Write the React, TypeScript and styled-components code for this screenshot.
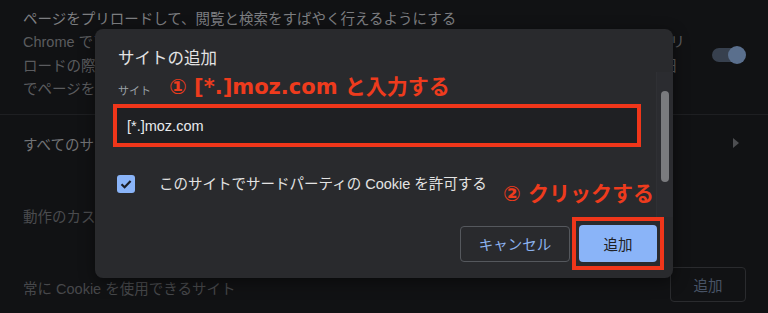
import React from "react";
import styled, { createGlobalStyle } from "styled-components";

const GlobalStyle = createGlobalStyle`
  html, body {
    margin: 0;
    padding: 0;
    background: #111214;
  }
  body {
    font-family: "Liberation Sans", "Noto Sans CJK JP", sans-serif;
    -webkit-font-smoothing: antialiased;
  }
`;

const Page = styled.div`
  position: relative;
  width: 768px;
  height: 313px;
  overflow: hidden;
  background: #111214;
  font-size: 14.5px;
`;

const PreloadRow = styled.div`
  display: flex;
  align-items: center;
  padding: 8px 22px 13px 23px;
  border-bottom: 1px solid #1e1f22;
`;

const TextColumn = styled.div`
  flex: 1;
  min-width: 0;
`;

const Line = styled.div<{ $tone?: "primary" | "secondary" }>`
  line-height: 23.3px;
  white-space: nowrap;
  color: ${(p) => (p.$tone === "secondary" ? "#5b5c5f" : "#7d7e81")};
`;

const Toggle = styled.span`
  position: relative;
  display: block;
  width: 34px;
  height: 18px;

  &::before {
    content: "";
    position: absolute;
    left: 0;
    top: 2px;
    width: 33px;
    height: 14px;
    border-radius: 7px;
    background: #37404e;
  }
  &::after {
    content: "";
    position: absolute;
    right: 0;
    top: 0;
    width: 18px;
    height: 18px;
    border-radius: 50%;
    background: #5a6f8d;
  }
`;

const LinkRow = styled.div`
  display: flex;
  align-items: center;
  justify-content: space-between;
  height: 56px;
  padding: 0 29px 0 23px;
  color: #727376;
`;

const SectionHeading = styled.div`
  padding: 34px 23px 0;
  line-height: 24px;
  color: #4a4b4e;
`;

const SiteListRow = styled.div`
  display: flex;
  align-items: center;
  justify-content: space-between;
  padding: 38px 22px 0 23px;
  color: #47484b;
`;

const SiteListLabel = styled.span`
  margin-top: 5px;
`;

const GhostButton = styled.button`
  width: 76px;
  height: 35px;
  border: 1px solid #2a2b2e;
  border-radius: 4px;
  background: transparent;
  color: #485366;
  font: inherit;
  font-size: 14.5px;
`;

/* modal */

const Dialog = styled.div`
  position: absolute;
  left: 95px;
  top: 29px;
  width: 578px;
  height: 249px;
  display: flex;
  flex-direction: column;
  background: #292a2d;
  border-radius: 8px;
  box-shadow: 0 4px 16px rgba(0, 0, 0, 0.45);
`;

const DialogTitle = styled.h2`
  margin: 0;
  padding: 19px 0 0 23px;
  font-size: 16.5px;
  line-height: 20px;
  font-weight: 400;
  color: #e3e3e3;
`;

const DialogBody = styled.div`
  position: relative;
  flex: 1;
  min-height: 0;
  display: flex;
  margin-top: 4px;
`;

const BodyContent = styled.div`
  flex: 1;
  padding: 2px 19px 0 22px;
`;

const LabelRow = styled.div`
  display: flex;
  align-items: flex-end;
  gap: 18px;
  height: 26px;
`;

const FieldLabel = styled.span`
  margin: 0 0 2px 1px;
  font-size: 11px;
  line-height: 13px;
  color: #9aa0a6;
`;

const Note = styled.span`
  font-family: "DejaVu Sans", "Noto Sans CJK JP", sans-serif;
  font-size: 21px;
  line-height: 26px;
  font-weight: 700;
  color: #ee3b1d;
  white-space: nowrap;
`;

const FloatingNote = styled(Note)`
  position: absolute;
  right: 19px;
  top: 109px;
`;

const Highlight = styled.div<{ $pad?: string }>`
  border: 4px solid #f0361a;
  padding: ${(p) => p.$pad || "0"};
`;

const FieldHighlight = styled(Highlight)`
  margin: 4px -4px 0;
`;

const SiteInput = styled.input`
  display: block;
  box-sizing: border-box;
  width: 100%;
  height: 35px;
  padding: 0 10px;
  border: none;
  outline: none;
  background: #1f2023;
  color: #e8eaed;
  font: inherit;
  font-size: 14.5px;
`;

const CheckRow = styled.label`
  display: flex;
  align-items: center;
  gap: 24px;
  margin-top: 28px;
  color: #e3e3e3;
  line-height: 18px;
`;

const CheckBox = styled.span`
  display: flex;
  align-items: center;
  justify-content: center;
  width: 18px;
  height: 18px;
  border-radius: 3px;
  background: #8ab4f8;
`;

const ScrollTrack = styled.div`
  width: 16px;
  border-left: 1px solid #2f3034;
  background: #2b2c30;
`;

const ScrollThumb = styled.div`
  width: 8px;
  height: 91px;
  margin: 19px auto 0;
  border-radius: 4px;
  background: #7a7b7e;
`;

const DialogFooter = styled.div`
  display: flex;
  justify-content: flex-end;
  align-items: center;
  gap: 2px;
  padding: 0 9px 8px 0;
`;

const OutlineButton = styled.button`
  width: 110px;
  height: 36px;
  border: 1px solid #55585d;
  border-radius: 4px;
  background: transparent;
  color: #8cb2ee;
  font: inherit;
  font-size: 14.5px;
`;

const PrimaryButton = styled.button`
  display: block;
  width: 78px;
  height: 37px;
  border: none;
  border-radius: 4px;
  background: #8ab4f8;
  color: #202124;
  font: inherit;
  font-size: 14.5px;
`;

const App: React.FC = () => {
  return (
    <>
      <GlobalStyle />
      <Page>
        <PreloadRow>
          <TextColumn>
            <Line>ページをプリロードして、閲覧と検索をすばやく行えるようにする</Line>
            <Line $tone="secondary">
              Chrome でアクセスする可能性があるページをプリロードします。この処理を適切に行うために、プリ
            </Line>
            <Line $tone="secondary">
              ロードの際には、閲覧しているサイトの情報を使用することがあります。保存期間は最大で約数十 日
            </Line>
            <Line $tone="secondary">でページを暗号化して送信することがあります。</Line>
          </TextColumn>
          <Toggle />
        </PreloadRow>

        <LinkRow>
          <span>すべてのサイトデータと権限を表示</span>
          <svg width="6" height="10" viewBox="0 0 6 10">
            <polygon points="0,0 6,5 0,10" fill="#4d4e51" />
          </svg>
        </LinkRow>

        <SectionHeading>動作のカスタマイズ</SectionHeading>

        <SiteListRow>
          <SiteListLabel>常に Cookie を使用できるサイト</SiteListLabel>
          <GhostButton>追加</GhostButton>
        </SiteListRow>

        <Dialog>
          <DialogTitle>サイトの追加</DialogTitle>
          <DialogBody>
            <BodyContent>
              <LabelRow>
                <FieldLabel>サイト</FieldLabel>
                <Note>① [*.]moz.com と入力する</Note>
              </LabelRow>
              <FieldHighlight>
                <SiteInput readOnly defaultValue="[*.]moz.com" />
              </FieldHighlight>
              <CheckRow>
                <CheckBox>
                  <svg width="14" height="14" viewBox="0 0 14 14">
                    <path
                      d="M2.5 7.2 L5.6 10.2 L11.6 3.9"
                      fill="none"
                      stroke="#1b1e26"
                      strokeWidth="2.2"
                    />
                  </svg>
                </CheckBox>
                <span>このサイトでサードパーティの Cookie を許可する</span>
              </CheckRow>
            </BodyContent>
            <ScrollTrack>
              <ScrollThumb />
            </ScrollTrack>
            <FloatingNote>② クリックする</FloatingNote>
          </DialogBody>
          <DialogFooter>
            <OutlineButton>キャンセル</OutlineButton>
            <Highlight $pad="4px 3px">
              <PrimaryButton>追加</PrimaryButton>
            </Highlight>
          </DialogFooter>
        </Dialog>
      </Page>
    </>
  );
};

export default App;
